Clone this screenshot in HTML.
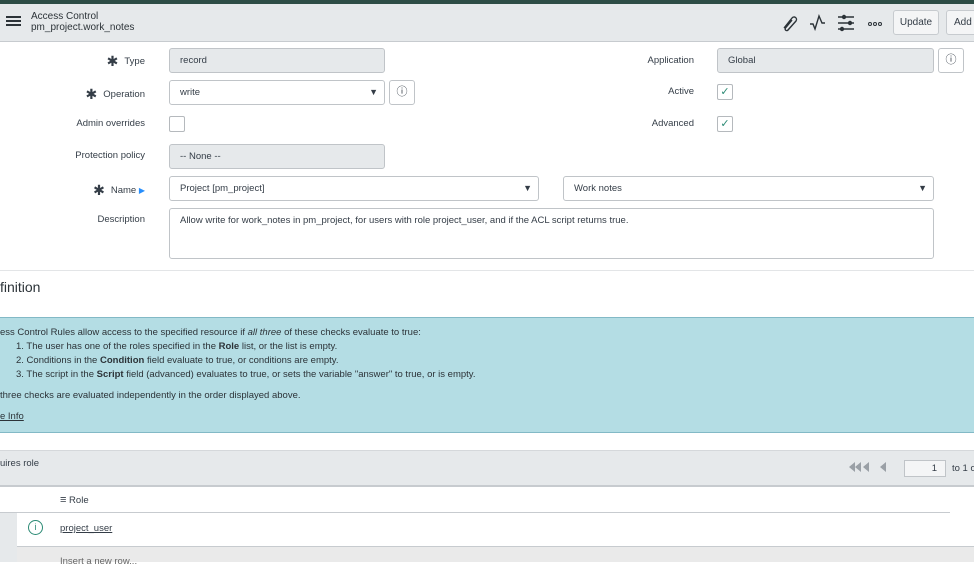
<!DOCTYPE html>
<html><head><style>
*{box-sizing:border-box;margin:0;padding:0}
body{width:974px;height:562px;overflow:hidden;background:#fff;font-family:"Liberation Sans",sans-serif;font-size:10px;color:#343d47;position:relative}
.a{position:absolute;white-space:nowrap}
.lbl{position:absolute;text-align:right;font-size:9.5px;color:#343d47;white-space:nowrap}
.inp{position:absolute;border:1px solid #c0c4c8;border-radius:3px;background:#fff;padding-left:10px;font-size:9.5px;line-height:23px;color:#343d47;white-space:nowrap}
.ro{background:#e6e9eb}
.arr{position:absolute;right:6px;top:0;font-size:9px}
.cb{position:absolute;width:16px;height:16px;border:1px solid #b5b9bd;border-radius:2px;background:#fff}
.ib{position:absolute;width:26px;height:25px;border:1px solid #c0c4c8;border-radius:3px;background:#fff;text-align:center;line-height:23px;font-size:11px}
.star{font-size:14px;vertical-align:-2px;margin-right:6px}
</style></head><body>
<div class="a" style="left:0;top:0;width:974px;height:4px;background:#2e4d46"></div>
<div class="a" style="left:0;top:4px;width:974px;height:38px;background:#e6e9eb;border-bottom:1px solid #c7cbcf"></div>
<div class="a" style="left:6px;top:16px;width:15px;height:2px;background:#2c3338;box-shadow:0 4px 0 #2c3338,0 8px 0 #2c3338"></div>
<div class="a" style="left:31px;top:11px;font-size:10px;color:#2c3338">Access Control</div>
<div class="a" style="left:31px;top:22px;font-size:10px;color:#2c3338">pm_project.work_notes</div>
<svg class="a" style="left:780px;top:14px" width="110" height="18" viewBox="0 0 110 18" fill="none" stroke="#2c3338" stroke-width="1.4">
<path d="M4 14 L12 4 a2.5 2.5 0 0 1 4 3 L8 16 a1.5 1.5 0 0 1 -2.5 -2 L12 6"/>
<path d="M30 10 L33 10 L35 15 L39 2 L42 9 L45 9"/>
<path d="M58 3h16M58 9h16M58 15h16"/><circle cx="64" cy="3" r="1.5" fill="#2c3338"/><circle cx="70" cy="9" r="1.5" fill="#2c3338"/><circle cx="62" cy="15" r="1.5" fill="#2c3338"/>
<circle cx="90" cy="10" r="1.5" stroke-width="1"/><circle cx="95" cy="10" r="1.5" stroke-width="1"/><circle cx="100" cy="10" r="1.5" stroke-width="1"/>
</svg>
<div class="a" style="left:893px;top:10px;width:46px;height:25px;border:1px solid #c7cbcf;border-radius:3px;background:#f4f5f6;text-align:center;line-height:23px;font-size:10px">Update</div>
<div class="a" style="left:946px;top:10px;width:40px;height:25px;border:1px solid #c7cbcf;border-radius:3px;background:#f4f5f6;padding-left:7px;line-height:23px;font-size:10px">Add</div>

<div class="lbl" style="left:0;width:145px;top:53px"><span class="star">✱</span>Type</div>
<div class="inp ro" style="left:169px;top:48px;width:216px;height:25px">record</div>
<div class="lbl" style="left:0;width:145px;top:86px"><span class="star">✱</span>Operation</div>
<div class="inp" style="left:169px;top:80px;width:216px;height:25px">write<span class="arr">▼</span></div>
<div class="ib" style="left:389px;top:80px">ⓘ</div>
<div class="lbl" style="left:0;width:145px;top:118px">Admin overrides</div>
<div class="cb" style="left:169px;top:116px"></div>
<div class="lbl" style="left:0;width:145px;top:150px">Protection policy</div>
<div class="inp ro" style="left:169px;top:144px;width:216px;height:25px">-- None --</div>
<div class="lbl" style="left:0;width:145px;top:182px"><span class="star">✱</span>Name <span style="color:#278efc;font-size:8px">▶</span></div>
<div class="inp" style="left:169px;top:176px;width:370px;height:25px">Project [pm_project]<span class="arr">▼</span></div>
<div class="inp" style="left:563px;top:176px;width:371px;height:25px">Work notes<span class="arr">▼</span></div>
<div class="lbl" style="left:0;width:145px;top:214px">Description</div>
<div class="inp" style="left:169px;top:208px;width:765px;height:51px;line-height:12px;padding-top:6px">Allow write for work_notes in pm_project, for users with role project_user, and if the ACL script returns true.</div>

<div class="lbl" style="left:600px;width:94px;top:55px">Application</div>
<div class="inp ro" style="left:717px;top:48px;width:217px;height:25px">Global</div>
<div class="ib" style="left:938px;top:48px">ⓘ</div>
<div class="lbl" style="left:600px;width:94px;top:86px">Active</div>
<div class="cb" style="left:717px;top:84px;text-align:center;line-height:14px;font-size:11px;color:#2b8a74">✓</div>
<div class="lbl" style="left:600px;width:94px;top:118px">Advanced</div>
<div class="cb" style="left:717px;top:116px;text-align:center;line-height:14px;font-size:11px;color:#2b8a74">✓</div>

<div class="a" style="left:0;top:270px;width:974px;height:1px;background:#e3e5e7"></div>
<div class="a" style="left:0;top:279px;font-size:14px;color:#2c3338">finition</div>
<div class="a" style="left:-2px;top:317px;width:980px;height:116px;background:#b4dde4;border:1px solid #82b9c6"></div>
<div class="a" style="left:0;top:326px;font-size:9.5px;line-height:14px;color:#2c3338">
<div>ess Control Rules allow access to the specified resource if <i>all three</i> of these checks evaluate to true:</div>
<div style="padding-left:16px">1. The user has one of the roles specified in the <b style="font-weight:600">Role</b> list, or the list is empty.</div>
<div style="padding-left:16px">2. Conditions in the <b style="font-weight:600">Condition</b> field evaluate to true, or conditions are empty.</div>
<div style="padding-left:16px">3. The script in the <b style="font-weight:600">Script</b> field (advanced) evaluates to true, or sets the variable "answer" to true, or is empty.</div>
<div style="margin-top:7px">three checks are evaluated independently in the order displayed above.</div>
<div style="margin-top:7px;text-decoration:underline">e Info</div>
</div>

<div class="a" style="left:0;top:450px;width:974px;height:37px;background:#e6e9eb;border-top:1px solid #d5d8db;border-bottom:2px solid #c7cbcf"></div>
<div class="a" style="left:0;top:458px;font-size:9.5px">uires role</div>
<svg class="a" style="left:849px;top:462px" width="42" height="10" viewBox="0 0 42 10" fill="#9aa0a6"><path d="M0 5 L6 0 V10Z M6 5 L12 0 V10Z M14 5 L20 0 V10Z M31 5 L37 0 V10Z"/></svg>
<div class="a" style="left:904px;top:460px;width:42px;height:17px;border:1px solid #c0c4c8;background:#f4f5f6;text-align:right;padding-right:8px;line-height:15px;font-size:9.5px">1</div>
<div class="a" style="left:952px;top:463px;font-size:9.5px">to 1 of</div>
<div class="a" style="left:60px;top:494px;font-size:9.5px"><b style="font-size:11px">≡</b> Role</div>
<div class="a" style="left:0;top:512px;width:950px;height:1px;background:#c7cbcf"></div>
<div class="a" style="left:0;top:513px;width:17px;height:49px;background:#e6e9eb"></div>
<div class="a" style="left:28px;top:520px;width:15px;height:15px;border:1.3px solid #2b8a74;border-radius:50%;color:#2b8a74;font-size:9px;text-align:center;line-height:12px">i</div>
<div class="a" style="left:60px;top:523px;font-size:9.5px;text-decoration:underline">project_user</div>
<div class="a" style="left:17px;top:546px;width:957px;height:16px;background:#eaeaea;border-top:1px solid #c7cbcf"></div>
<div class="a" style="left:60px;top:556px;font-size:9.5px;color:#666">Insert a new row...</div>
</body></html>
